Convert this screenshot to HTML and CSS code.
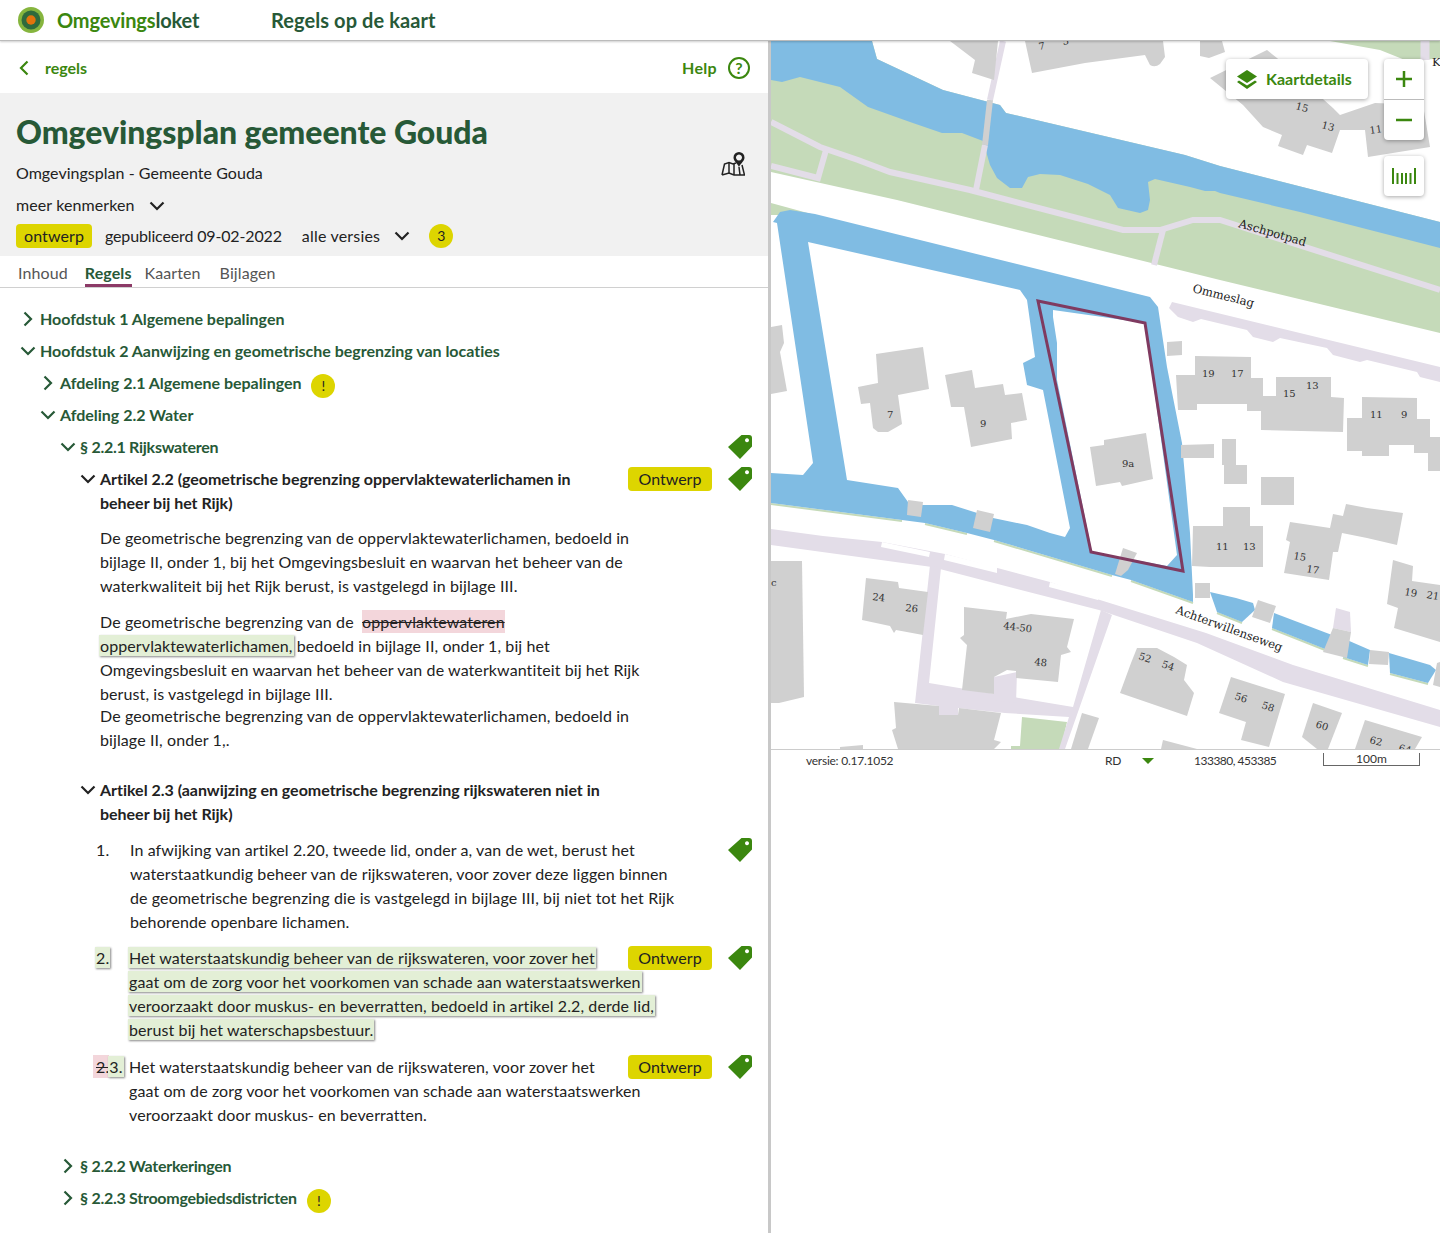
FILE: index.html
```html
<!DOCTYPE html>
<html lang="nl">
<head>
<meta charset="utf-8">
<title>Regels op de kaart</title>
<link rel="stylesheet" href="styles.css">
</head>
<body>

<svg class="defs" width="0" height="0">
  <symbol id="down" viewBox="0 0 16 10"><path d="M1.5 1.5 L8 8 L14.5 1.5" fill="none" stroke="currentColor" stroke-width="2.2"/></symbol>
  <symbol id="right" viewBox="0 0 10 16"><path d="M1.5 1.5 L8 8 L1.5 14.5" fill="none" stroke="currentColor" stroke-width="2.2"/></symbol>
  <symbol id="tag" viewBox="0 0 24 24"><path fill-rule="evenodd" fill="#3b870f" d="M0 12 L13.5 0 H21 Q24 0 24 3 V11.5 L12 24 Z M19 3.2 a2 2 0 1 0 .01 0 Z"/></symbol>
</svg>

<header class="topbar">
  <svg class="logo" width="26" height="26" viewBox="0 0 26 26"><circle cx="13" cy="13" r="13" fill="#86b53e"/><circle cx="13" cy="13" r="9.5" fill="#2f6a3c"/><circle cx="13" cy="13" r="4.7" fill="#e2730c"/></svg>
  <span class="brand">Omgevings<span class="brand2">loket</span></span>
  <span class="apptitle">Regels op de kaart</span>
</header>

<main class="layout">
<section class="sidebar">

  <div class="backrow">
    <a class="back"><svg width="10" height="16" class="flip"><use href="#right"/></svg><span>regels</span></a>
    <a class="help"><span>Help</span>
      <svg width="24" height="24" viewBox="0 0 24 24"><circle cx="12" cy="12" r="10" fill="none" stroke="#3b870f" stroke-width="2"/><text x="12" y="17.5" text-anchor="middle" class="helpmark">?</text></svg>
    </a>
  </div>

  <div class="plan">
    <h1>Omgevingsplan gemeente Gouda</h1>
    <div class="plan-sub">
      <span>Omgevingsplan - Gemeente Gouda</span>
      <svg class="plan-icon" width="24" height="24" viewBox="0 0 24 24" fill="none" stroke="#222" stroke-width="1.5">
        <path d="M1 23 L3.5 12 L8 10.5 L12 12 L15 11 M1 23 L8 21 L13 23 L23.5 23 L21 13"/>
        <path d="M8 10.5 V21 M13 12 V23 M18 15 L19 23"/>
        <path fill="#222" fill-rule="evenodd" stroke="none" d="M18 0 a5.5 5.5 0 0 0 -5.5 5.5 C12.500 9 16 11 18 15 C20 11 23.500 9 23.500 5.500 A5.500 5.500 0 0 0 18 0 Z M18 2.500 a3 3 0 1 1 -.01 0 Z"/>
      </svg>
    </div>
    <div class="plan-more">meer kenmerken <svg width="16" height="10" class="more-chev"><use href="#down"/></svg></div>
    <div class="plan-meta">
      <span class="pill">ontwerp</span>
      <span class="published">gepubliceerd 09-02-2022</span>
      <span class="versions">alle versies</span>
      <svg width="16" height="10" class="versions-chev"><use href="#down"/></svg>
      <span class="dot">3</span>
    </div>
  </div>

  <nav class="tabs">
    <a>Inhoud</a>
    <a class="active">Regels</a>
    <a>Kaarten</a>
    <a>Bijlagen</a>
  </nav>

  <div class="tree">
    <div class="node l1"><svg class="chev-r" width="10" height="16"><use href="#right"/></svg><span>Hoofdstuk 1 Algemene bepalingen</span></div>
    <div class="node l1"><svg class="chev-d" width="16" height="10"><use href="#down"/></svg><span>Hoofdstuk 2 Aanwijzing en geometrische begrenzing van locaties</span></div>
    <div class="node l2"><svg class="chev-r" width="10" height="16"><use href="#right"/></svg><span>Afdeling 2.1 Algemene bepalingen</span><span class="dot warn">!</span></div>
    <div class="node l2"><svg class="chev-d" width="16" height="10"><use href="#down"/></svg><span>Afdeling 2.2 Water</span></div>
    <div class="node l3"><svg class="chev-d" width="16" height="10"><use href="#down"/></svg><span class="grow">§ 2.2.1 Rijkswateren</span><svg class="tag" width="24" height="24"><use href="#tag"/></svg></div>

    <div class="node article first">
      <svg class="chev-d" width="16" height="10"><use href="#down"/></svg>
      <span class="grow">Artikel 2.2 (geometrische begrenzing oppervlaktewaterlichamen in<br>beheer bij het Rijk)</span>
      <span class="pill big">Ontwerp</span><svg class="tag" width="24" height="24"><use href="#tag"/></svg>
    </div>
    <p class="para">De geometrische begrenzing van de oppervlaktewaterlichamen, bedoeld in<br>bijlage II, onder 1, bij het Omgevingsbesluit en waarvan het beheer van de<br>waterkwaliteit bij het Rijk berust, is vastgelegd in bijlage III.</p>
    <p class="para second">De geometrische begrenzing van de &nbsp;<del>oppervlaktewateren</del><br><ins>oppervlaktewaterlichamen,</ins> bedoeld in bijlage II, onder 1, bij het<br>Omgevingsbesluit en waarvan het beheer van de waterkwantiteit bij het Rijk<br>berust, is vastgelegd in bijlage III.</p>
    <p class="para third">De geometrische begrenzing van de oppervlaktewaterlichamen, bedoeld in<br>bijlage II, onder 1,.</p>

    <div class="node article">
      <svg class="chev-d" width="16" height="10"><use href="#down"/></svg>
      <span class="grow">Artikel 2.3 (aanwijzing en geometrische begrenzing rijkswateren niet in<br>beheer bij het Rijk)</span>
    </div>

    <div class="li li1">
      <span class="num">1.</span>
      <span class="grow">In afwijking van artikel 2.20, tweede lid, onder a, van de wet, berust het<br>waterstaatkundig beheer van de rijkswateren, voor zover deze liggen binnen<br>de geometrische begrenzing die is vastgelegd in bijlage III, bij niet tot het Rijk<br>behorende openbare lichamen.</span>
      <svg class="tag" width="24" height="24"><use href="#tag"/></svg>
    </div>
    <div class="li li2">
      <span class="num"><ins>2.</ins></span>
      <span class="grow"><ins>Het waterstaatskundig beheer van de rijkswateren, voor zover het<br>gaat om de zorg voor het voorkomen van schade aan waterstaatswerken<br>veroorzaakt door muskus- en beverratten, bedoeld in artikel 2.2, derde lid,<br>berust bij het waterschapsbestuur.</ins></span>
      <span class="pill big">Ontwerp</span><svg class="tag" width="24" height="24"><use href="#tag"/></svg>
    </div>
    <div class="li li3">
      <span class="num"><del>2.</del><ins>3.</ins></span>
      <span class="grow">Het waterstaatskundig beheer van de rijkswateren, voor zover het<br>gaat om de zorg voor het voorkomen van schade aan waterstaatswerken<br>veroorzaakt door muskus- en beverratten.</span>
      <span class="pill big">Ontwerp</span><svg class="tag" width="24" height="24"><use href="#tag"/></svg>
    </div>

    <div class="node l3 after"><svg class="chev-r" width="10" height="16"><use href="#right"/></svg><span>§ 2.2.2 Waterkeringen</span></div>
    <div class="node l3"><svg class="chev-r" width="10" height="16"><use href="#right"/></svg><span>§ 2.2.3 Stroomgebiedsdistricten</span><span class="dot warn">!</span></div>
  </div>
</section>

<section class="mapside">
  <div class="map">
    <svg class="mapsvg" width="669" height="708" viewBox="771 41 669 708">
      <!-- parks -->
      <path class="green" d="M771 41 H1440 V333 L1220 280 L897 200 L771 172 Z"/>
      <path class="green" d="M771 203 L815 215 L771 215 Z"/>
      <path class="white" d="M872 41 L1440 41 V222 L1220 166 L1185 155 L1006 113 L1000 105 L943 90 L877 59 Z"/>
      <path class="green" d="M1330 41 H1440 V58 L1410 62 L1380 50 Z"/>
      <!-- north canal -->
      <path class="blue" d="M771 41 H872 L877 59 L943 90 L1000 105 L1006 113 L1185 155 L1220 166 L1440 222 V248 L1300 212 L1220 193 L1215 191 L1205 191 L1190 187 L1155 179 L1148 182 L1150 200 L1148 210 L1140 213 L1118 208 L1110 195 L1088 184 L1060 175 L1040 174 L1028 177 L1022 188 L1010 188 L997 178 L990 165 L983 141 L962 133 L942 133 L910 122 L868 107 L840 87 L800 77 L782 82 L771 80 Z"/>
      <!-- paths -->
      <g class="path">
        <path d="M771 122 L820 147 L858 160 L890 172 L970 190 L1123 230 L1160 230 L1193 220 L1220 220 L1440 290"/>
        <path d="M771 166 L818 178 L826 150"/>
        <path d="M1003 41 L990 100 M985 145 L976 190"/>
        <path d="M1163 230 L1154 265"/>
        <path d="M1425 41 V60" stroke-width="9"/>
      </g>
      <path d="M990 100 L985 145" stroke="#d0d0d0" stroke-width="6" fill="none"/>
      <!-- buildings north -->
      <path class="bld" d="M950 41 H998 L994 80 L972 73 L975 60 Z"/>
      <path class="bld" d="M1011 41 H1163 L1165 57 L1160 64 Q1155 68 1150 65 L1145 55 L1085 63 L1032 73 L1025 41 Z"/>
      <path class="bld" d="M1210 78 L1267 50 L1277 58 L1333 108 L1340 115 L1375 103 L1423 105 L1430 147 L1368 157 L1365 130 L1340 130 L1332 153 L1307 145 L1303 155 L1278 146 L1282 135 L1263 127 L1243 105 Z"/>
      <path class="bld" d="M1200 41 H1222 L1225 52 L1209 58 L1200 56 Z"/>
      <!-- moat -->
      <path class="bank" d="M771 504 L902 521 M925 524 L967 534 M994 541 L1112 576 M1131 581 L1193 603 M1217 613 L1242 623 M1272 629 L1325 650 M1343 658 L1368 666 M1390 674 L1428 684"/>
      <path class="blue" d="M773 222 L780 212 L790 210 L815 214 L1150 297 L1158 307 L1167 367 L1182 443 L1190 533 L1193 595 L1193 602 L1131 580 L1112 575 L994 540 L967 533 L925 523 L902 520 L771 503 V473 L803 475 L813 463 L777 223 Z"/>
      <path class="white" d="M808 242 L1020 290 L1027 300 L1035 357 L1023 363 L1027 385 L1043 390 L1070 528 L1065 537 L1050 533 L1027 525 L993 518 L952 505 L923 505 L908 502 L898 488 L847 480 Z"/>
      <path class="white" d="M1053 310 L1145 323 L1177 555 L1167 566 L1092 552 L1057 380 L1057 343 L1053 317 Z"/>
      <path class="blue" d="M1210 592 L1236 598 L1253 603 L1255 610 L1242 622 L1217 612 Z"/>
      <path class="blue" d="M1274 613 L1332 635 L1325 649 L1272 628 Z"/>
      <path class="blue" d="M1347 640 L1370 650 L1368 665 L1343 657 Z"/>
      <path class="blue" d="M1389 653 L1430 665 L1436 670 L1428 683 L1390 673 Z"/>
      <!-- bridges -->
      <path class="bld" d="M908 500 L923 502 L921 517 L907 515 Z"/>
      <path class="bld" d="M977 510 L994 514 L990 532 L973 528 Z"/>
      <path class="bld" d="M1123 548 L1137 553 L1128 570 L1121 576 L1115 574 Z"/>
      <path class="bld" d="M1195 583 H1210 V598 H1195 Z"/>
      <path class="bld" d="M1258 600 L1276 606 L1270 623 L1252 617 Z"/>
      <path class="lilac" d="M1336 608 L1350 612 L1351 632 L1333 628 Z"/>
      <path class="bld" d="M1333 628 L1351 632 L1347 658 L1323 652 Z"/>
      <path class="bld" d="M1370 650 L1389 652 L1388 665 L1369 664 Z"/>
      <path class="bld" d="M1437 663 L1440 662 V687 L1433 685 Z"/>
      <!-- roads -->
      <path class="lilac" d="M771 529 L823 536 L882 542 L945 554 L1050 582 L1100 600 L1206 633 L1293 665 L1440 710 V727 L1283 682 L1197 643 L1099 610 L932 567 L771 545 Z"/>
      <path class="white" d="M882 542 L930 552 L929 557 L881 547 Z"/>
      <path class="white" d="M945 554 L997 567 L997 573 L944 560 Z"/>
      <path class="white" d="M1050 582 L1100 597 L1098 600 L1049 587 Z"/>
      <path class="lilac" d="M1172 302 L1440 367 V382 L1420 377 L1417 372 L1367 360 L1360 362 L1333 355 L1327 348 L1280 338 L1273 342 L1253 337 L1247 330 L1201 319 L1193 322 L1178 317 L1169 308 Z"/>
      <path class="green" d="M1022 717 L1067 722 L1061 749 H1011 V746 H1020 Z"/>
      <path class="bld" d="M1071 749 L1082 713 L1099 718 L1088 749 Z"/>
      <path class="lilac" d="M930 565 L941 568 L929 683 L1073 707 L1101 610 L1112 615 L1065 749 H1059 L1069 717 L1005 713 L958 708 L958 715 L939 715 L939 706 L915 703 Z"/>
      <path class="lilac" d="M994 677 L1017 672 L1016 703 L994 700 Z"/>
      <!-- buildings -->
      <path class="bld" d="M876 354 L923 347 L929 389 L898 395 L902 424 L888 432 L878 432 L873 428 L870 403 L861 404 L858 387 L878 383 Z"/>
      <path class="bld" d="M945 375 L972 370 L975 388 L1003 384 L1005 395 L1022 393 L1027 420 L1011 423 L1012 439 L971 447 L964 407 L951 407 Z"/>
      <path class="bld" d="M1090 447 L1104 445 L1104 440 L1146 433 L1153 479 L1122 486 L1120 482 L1096 486 Z"/>
      <path class="bld" d="M771 327 L782 325 L784 343 L780 352 L787 391 L771 394 Z"/>
      <path class="bld" d="M1167 342 L1182 341 V355 L1167 356 Z"/>
      <path class="bld" d="M1181 445 L1214 444 V458 H1181 Z"/>
      <path class="bld" d="M1176 375 H1195 V356 L1251 357 V378 H1263 V396 H1276 V377 H1331 V397 L1344 398 L1343 432 L1261 430 V411 H1247 V404 H1197 V410 H1178 Z"/>
      <path class="bld" d="M1362 397 L1417 398 V419 H1430 V437 H1440 V471 H1428 V453 H1414 V445 H1389 V456 H1362 V451 H1347 V418 H1362 Z"/>
      <path class="bld" d="M1222 439 H1236 V465 H1247 V484 H1224 V465 H1222 Z"/>
      <path class="bld" d="M1261 477 H1294 V505 H1261 Z"/>
      <path class="bld" d="M1193 526 H1223 V507 H1250 V526 H1263 V567 H1210 L1192 566 Z"/>
      <path class="bld" d="M1290 522 L1330 528 L1333 514 L1343 516 L1346 504 L1367 508 L1403 513 L1397 545 L1367 538 L1342 533 L1338 552 L1333 552 L1329 580 L1284 573 L1290 542 L1286 540 Z"/>
      <path class="bld" d="M1393 560 L1413 566 L1412 581 L1440 585 V642 L1394 628 L1398 608 L1387 604 Z"/>
      <path class="bld" d="M866 578 L898 582 L899 588 L928 592 L923 635 L896 630 L894 633 L890 626 L862 620 Z"/>
      <path class="bld" d="M964 607 L1007 612 L1006 619 L1031 614 L1074 619 L1067 647 L1071 652 L1061 655 L1058 682 L1016 678 L1016 671 L1007 670 L994 677 V694 L962 690 L967 645 L960 638 L964 635 Z"/>
      <path class="bld" d="M1137 648 L1157 648 L1174 657 L1187 665 L1184 680 L1194 693 L1187 716 L1120 693 L1131 663 Z"/>
      <path class="bld" d="M1231 677 L1285 694 L1269 747 L1241 740 L1246 722 L1219 713 Z"/>
      <path class="bld" d="M1313 703 L1342 713 L1328 749 H1317 L1302 737 Z"/>
      <path class="bld" d="M1365 720 L1422 737 L1415 749 H1355 Z"/>
      <path class="bld" d="M894 702 L939 706 V715 H958 L959 708 L1001 713 L994 740 L1001 742 L994 749 H898 L892 730 L896 728 Z"/>
      <path class="bld" d="M1163 740 L1197 749 H1161 Z"/>
      <path class="bld" d="M840 747 L863 745 V749 H840 Z"/>
      <path class="bld" d="M771 561 H802 L804 697 L779 703 H771 Z"/>
      <!-- plan area -->
      <path d="M1038 301 L1145 323 L1183 571 L1091 552 Z" fill="none" stroke="#7f3a60" stroke-width="3"/>
      <!-- labels -->
      <g class="labels">
        <text x="1039" y="50" transform="rotate(-8 1039 50)">7</text>
        <text x="1063" y="45" transform="rotate(-8 1063 45)">5</text>
        <text x="1295" y="109" transform="rotate(15 1295 109)">15</text>
        <text x="1321" y="128" transform="rotate(15 1321 128)">13</text>
        <text x="1370" y="134" transform="rotate(-8 1370 134)">11</text>
        <text x="1432" y="66" class="street">K</text>
        <text x="887" y="418">7</text>
        <text x="980" y="427">9</text>
        <text x="1122" y="467">9a</text>
        <text x="1202" y="377">19</text>
        <text x="1231" y="377">17</text>
        <text x="1283" y="397">15</text>
        <text x="1306" y="389">13</text>
        <text x="1370" y="418">11</text>
        <text x="1401" y="418">9</text>
        <text x="1216" y="550">11</text>
        <text x="1243" y="550">13</text>
        <text x="1293" y="559" transform="rotate(10 1293 559)">15</text>
        <text x="1306" y="572" transform="rotate(10 1306 572)">17</text>
        <text x="1404" y="595" transform="rotate(10 1404 595)">19</text>
        <text x="1426" y="598" transform="rotate(10 1426 598)">21</text>
        <text x="872" y="600" transform="rotate(7 872 600)">24</text>
        <text x="905" y="611" transform="rotate(7 905 611)">26</text>
        <text x="1003" y="629" transform="rotate(7 1003 629)">44-50</text>
        <text x="1034" y="665" transform="rotate(7 1034 665)">48</text>
        <text x="1138" y="659" transform="rotate(18 1138 659)">52</text>
        <text x="1161" y="667" transform="rotate(18 1161 667)">54</text>
        <text x="1234" y="699" transform="rotate(18 1234 699)">56</text>
        <text x="1261" y="708" transform="rotate(18 1261 708)">58</text>
        <text x="1315" y="727" transform="rotate(18 1315 727)">60</text>
        <text x="1369" y="743" transform="rotate(14 1369 743)">62</text>
        <text x="1398" y="751" transform="rotate(14 1398 751)">64</text>
        <text x="771" y="586">c</text>
        <text x="1238" y="227" class="street" transform="rotate(16 1238 227)">Aschpotpad</text>
        <text x="1192" y="292" class="street" transform="rotate(14 1192 292)">Ommeslag</text>
        <text x="1175" y="613" class="street" transform="rotate(20 1175 613)">Achterwillenseweg</text>
      </g>
    </svg>

    <a class="mapbtn details">
      <svg width="20" height="19" viewBox="0 0 20 19" fill="#3b870f"><path d="M10 0 L20 6.500 L10 13 L0 6.500 Z"/><path d="M2 10.500 L10 15.500 L18 10.500 L20 12 L10 19 L0 12 Z"/></svg>
      <span>Kaartdetails</span>
    </a>
    <div class="mapbtn zoom">
      <div class="zoombtn"><svg width="16" height="16" viewBox="0 0 16 16"><path d="M8 0 V16 M0 8 H16" stroke="#3b870f" stroke-width="2.500"/></svg></div>
      <div class="zoombtn"><svg width="16" height="16" viewBox="0 0 16 16"><path d="M0 8 H16" stroke="#3b870f" stroke-width="2.500"/></svg></div>
    </div>
    <div class="mapbtn ruler">
      <svg width="24" height="16" viewBox="0 0 24 16" stroke="#3b870f" stroke-width="2"><path d="M1 0 V16 M5.500 5 V16 M10 5 V16 M14 5 V16 M18.500 5 V16 M23 0 V16"/></svg>
    </div>
  </div>

  <div class="mapfoot">
    <span class="f-version">versie: 0.17.1052</span>
    <span class="f-crs">RD</span>
    <span class="f-tri"></span>
    <span class="f-coords">133380, 453385</span>
    <span class="f-scale">100m</span>
  </div>
</section>
</main>

</body>
</html>
```

FILE: styles.css
```css
* {
  box-sizing: border-box;
}

html, body {
  margin: 0;
  padding: 0;
}

body {
  font-family: Lato, "Noto Sans", sans-serif;
  font-size: 16px;
  line-height: 24px;
  color: #222;
  background: #fff;
  letter-spacing: 0.1px;
}

.defs {
  position: absolute;
}

svg {
  flex: none;
}

/* top bar */
.topbar {
  height: 41px;
  display: flex;
  align-items: center;
  padding-left: 18px;
  border-bottom: 1px solid #bbb;
  box-shadow: 0 1px 2px rgba(0,0,0,.2);
  position: relative;
  z-index: 2;
  font-size: 20px;
  font-weight: 700;
  letter-spacing: -0.16px;
}

.brand {
  margin-left: 13px;
  color: #3b870f;
  width: 214px;
}

.brand2 {
  color: #275937;
}

.apptitle {
  color: #275937;
  letter-spacing: 0.08px;
}

.layout {
  display: flex;
  min-height: 1192px;
}

/* left side */
.sidebar {
  width: 771px;
  border-right: 3px solid #c8c8c8;
  flex: none;
}

.backrow {
  height: 52px;
  display: flex;
  align-items: center;
  justify-content: space-between;
  padding: 1px 17px 0 19px;
  color: #3b870f;
  font-weight: 700;
  letter-spacing: -0.02px;
}

.back, .help {
  display: flex;
  align-items: center;
}

.flip {
  transform: scaleX(-1);
  margin-right: 16px;
}

.help span {
  margin-right: 10px;
  letter-spacing: 0.3px;
}

.helpmark {
  font-size: 16px;
  font-weight: 700;
  fill: #3b870f;
}

.plan {
  height: 163px;
  background: #f1f1f1;
  padding: 18px 23px 0 16px;
}

.plan h1 {
  margin: 0;
  font-size: 32px;
  line-height: 42px;
  color: #275937;
  font-weight: 900;
  letter-spacing: -0.05px;
}

.plan-sub {
  display: flex;
  justify-content: space-between;
  align-items: center;
  height: 24px;
  margin-top: 8px;
  letter-spacing: 0.03px;
}

.plan-icon {
  align-self: flex-start;
  margin-top: -9px;
}

.plan-more {
  margin-top: 8px;
  height: 24px;
}

.more-chev {
  margin-left: 10px;
}

.plan-meta {
  display: flex;
  align-items: center;
  margin-top: 7px;
}

.pill {
  background: #ddd500;
  border-radius: 4px;
  height: 24px;
  padding: 0 8px;
  line-height: 24px;
}

.published {
  margin: 0 20px 0 13px;
  letter-spacing: -0.15px;
}

.versions {
  letter-spacing: 0.2px;
}

.versions-chev {
  margin: 0 19px 0 14px;
}

.dot {
  width: 24px;
  height: 24px;
  border-radius: 50%;
  background: #ddd500;
  text-align: center;
  font-size: 14px;
  font-weight: 400;
  color: #222;
}

.warn {
  margin-left: 10px;
  margin-top: 3px;
}

.tabs {
  height: 32px;
  border-bottom: 1px solid #d0d0d0;
  display: flex;
  padding-left: 18px;
  color: #555;
}

.tabs a {
  margin-right: 19px;
  height: 31px;
  line-height: 34px;
}

.tabs a:first-child {
  margin-right: 17px;
}

.tabs .active {
  color: #275937;
  font-weight: 700;
  border-bottom: 3px solid #8c3a67;
  margin-right: 13px;
}

/* tree */
.tree {
  padding: 19px 16px 0 0;
}

.node {
  display: flex;
  min-height: 32px;
  color: #275937;
  font-weight: 700;
  line-height: 24px;
  letter-spacing: -0.02px;
}

.node svg:first-child {
  margin-top: 7px;
}

.chev-d {
  margin-right: 4px;
  margin-top: 7px;
}

.chev-r {
  margin-right: 8px;
  margin-top: 4px;
}

.node .chev-r:first-child {
  margin-top: 4px;
}

.l1 { padding-left: 20px; }
.l1 .chev-r { margin-left: 3px; margin-right: 7px; }
.l2 { padding-left: 40px; }
.l2 .chev-r { margin-left: 3px; margin-right: 7px; }
.l3 { padding-left: 60px; letter-spacing: -0.27px; }
.l3 .chev-r { margin-left: 3px; margin-right: 7px; }

.article {
  padding-left: 80px;
  color: #222;
}

.article.first {
  margin-bottom: 11px;
}

.grow {
  flex: 1;
  min-width: 0;
  white-space: nowrap;
}

.tag {
  margin-left: 16px;
  margin-top: 0;
}

.big {
  width: 84px;
  padding: 0;
  text-align: center;
  font-weight: 400;
  color: #222;
  position: relative;
}

.para {
  margin: 0 0 12px 100px;
}

.para.third {
  margin-top: -14px;
  margin-bottom: 26px;
}

del {
  background: #f3d6db;
  text-decoration: line-through;
  padding: 2px 0;
}

.num del {
  margin-left: -3px;
  padding: 2px 0 2px 3px;
}

ins {
  background: #e3efd6;
  text-decoration: none;
  box-shadow: 1px 1px 2px #888;
  -webkit-box-decoration-break: clone;
  box-decoration-break: clone;
  padding: 1px;
  margin: 0 -1px;
}

.li {
  display: flex;
  margin-bottom: 12px;
  padding-left: 96px;
}

.li1 {
  margin-top: 12px;
}

.li1 .grow {
  padding-left: 1px;
}

.li2 {
  margin-bottom: 13px;
}

.num {
  width: 33px;
  flex: none;
}

.after {
  margin-top: 27px;
}

/* map */
.mapside {
  flex: 1;
}

.map {
  height: 708px;
  position: relative;
  overflow: hidden;
}

.mapsvg {
  display: block;
}

.green { fill: #c5dab9; }
.white { fill: #fff; }
.blue { fill: #80bce3; }
.lilac { fill: #e3dde8; }
.bld { fill: #d0d0d0; }

.bank {
  fill: none;
  stroke: #c5dab9;
  stroke-width: 2;
}

.path {
  fill: none;
  stroke: #e3dde8;
  stroke-width: 6;
}

.labels {
  font-family: "DejaVu Serif", serif;
  font-size: 10px;
  fill: #333;
  letter-spacing: 0;
}

.labels .street {
  font-size: 11.7px;
  fill: #222;
}

.mapbtn {
  position: absolute;
  background: #fff;
  border-radius: 4px;
  box-shadow: 0 1px 4px rgba(0,0,0,.35);
  color: #3b870f;
  font-weight: 700;
  letter-spacing: 0;
}

.details {
  left: 455px;
  top: 18px;
  width: 142px;
  height: 40px;
  display: flex;
  align-items: center;
  padding-left: 11px;
}

.details span {
  margin-left: 9px;
}

.zoom {
  left: 613px;
  top: 18px;
  width: 40px;
  height: 81px;
}

.zoombtn {
  height: 40px;
  display: flex;
  align-items: center;
  justify-content: center;
}

.zoombtn + .zoombtn {
  border-top: 1px solid #bbb;
  height: 41px;
}

.ruler {
  left: 613px;
  top: 115px;
  width: 40px;
  height: 40px;
  display: flex;
  align-items: center;
  justify-content: center;
}

.mapfoot {
  height: 23px;
  border-top: 1px solid #ccc;
  display: flex;
  align-items: center;
  padding-left: 35px;
  font-size: 12px;
  line-height: 18px;
  color: #333;
  letter-spacing: -0.25px;
}

.f-version { width: 299px; }
.f-crs { width: 37px; }

.f-tri {
  width: 0;
  height: 0;
  border-left: 6px solid transparent;
  border-right: 6px solid transparent;
  border-top: 6px solid #3b870f;
  margin-right: 40px;
}

.f-coords {
  width: 129px;
  letter-spacing: -0.5px;
}

.f-scale {
  width: 97px;
  height: 13px;
  line-height: 12px;
  margin-top: -3px;
  text-align: center;
  border: 1px solid #666;
  border-top: 0;
  letter-spacing: 0;
}
```
